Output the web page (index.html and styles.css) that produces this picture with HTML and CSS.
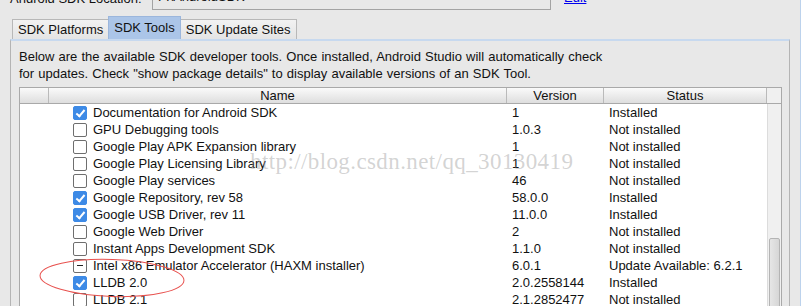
FILE: index.html
```html
<!DOCTYPE html>
<html>
<head>
<meta charset="utf-8">
<link rel="stylesheet" href="styles.css">
</head>
<body>
<div class="window">
  <div class="location">
    <span class="loc-label">Android SDK Location:</span>
    <span class="loc-field"><span class="loc-value">F:\AndroidSDK</span></span>
    <a class="loc-edit">Edit</a>
  </div>
  <div class="tabs">
    <div class="tab">SDK Platforms</div>
    <div class="tab active">SDK Tools</div>
    <div class="tab">SDK Update Sites</div>
  </div>
  <div class="panel">
    <p class="desc">Below are the available SDK developer tools. Once installed, Android Studio will automatically check<br>for updates. Check "show package details" to display available versions of an SDK Tool.</p>
    <div class="table">
      <div class="thead">
        <div class="th"></div>
        <div class="th">Name</div>
        <div class="th">Version</div>
        <div class="th">Status</div>
        <div class="th corner"></div>
      </div>
      <div class="tbody">
        <div class="rows">
          <div class="row"><span></span><span class="name"><i class="cb on"></i>Documentation for Android SDK</span><span>1</span><span>Installed</span></div>
          <div class="row"><span></span><span class="name"><i class="cb"></i>GPU Debugging tools</span><span>1.0.3</span><span>Not installed</span></div>
          <div class="row"><span></span><span class="name"><i class="cb"></i>Google Play APK Expansion library</span><span>1</span><span>Not installed</span></div>
          <div class="row"><span></span><span class="name"><i class="cb"></i>Google Play Licensing Library</span><span>1</span><span>Not installed</span></div>
          <div class="row"><span></span><span class="name"><i class="cb"></i>Google Play services</span><span>46</span><span>Not installed</span></div>
          <div class="row"><span></span><span class="name"><i class="cb on"></i>Google Repository, rev 58</span><span>58.0.0</span><span>Installed</span></div>
          <div class="row"><span></span><span class="name"><i class="cb on"></i>Google USB Driver, rev 11</span><span>11.0.0</span><span>Installed</span></div>
          <div class="row"><span></span><span class="name"><i class="cb"></i>Google Web Driver</span><span>2</span><span>Not installed</span></div>
          <div class="row"><span></span><span class="name"><i class="cb"></i>Instant Apps Development SDK</span><span>1.1.0</span><span>Not installed</span></div>
          <div class="row"><span></span><span class="name"><i class="cb mixed"></i>Intel x86 Emulator Accelerator (HAXM installer)</span><span>6.0.1</span><span>Update Available: 6.2.1</span></div>
          <div class="row"><span></span><span class="name"><i class="cb on"></i>LLDB 2.0</span><span>2.0.2558144</span><span>Installed</span></div>
          <div class="row"><span></span><span class="name"><i class="cb"></i>LLDB 2.1</span><span>2.1.2852477</span><span>Not installed</span></div>
        </div>
        <div class="scrollbar"><div class="thumb"></div></div>
      </div>
    </div>
  </div>
  <div class="watermark">http://blog.csdn.net/qq_30130419</div>
  <svg class="ellipse" width="150" height="44" viewBox="0 0 150 44">
    <ellipse cx="73" cy="21" rx="72" ry="18.5" transform="rotate(2 73 21)" fill="none" stroke="#e8524f" stroke-width="1"/>
  </svg>
</div>
</body>
</html>
```
FILE: styles.css
```css
html, body {
  margin: 0;
  padding: 0;
}
body {
  background: #e8e8e8;
  font-family: "Liberation Sans", Arial, sans-serif;
  font-size: 13px;
  color: #111;
  overflow: hidden;
}
.window {
  position: relative;
  width: 801px;
  height: 306px;
  overflow: hidden;
  border-right: 1px solid #bcd2ec;
  box-sizing: border-box;
}
.location {
  height: 10px;
  display: flex;
  align-items: flex-end;
  padding-left: 10px;
}
.loc-label {
  line-height: 14px;
  margin-bottom: 4px;
  width: 142px;
}
.loc-field {
  width: 399px;
  height: 22px;
  border: 1px solid #a3a3a3;
  box-sizing: border-box;
  padding-left: 5px;
  display: flex;
  align-items: flex-end;
}
.loc-value {
  line-height: 14px;
  margin-bottom: 5px;
}
.loc-edit {
  margin-left: 13px;
  color: #0000ee;
  text-decoration: underline;
  line-height: 14px;
  margin-bottom: 5px;
}
.tabs {
  display: flex;
  align-items: flex-end;
  margin-top: 6px;
  padding-left: 12px;
  height: 23px;
}
.tab {
  height: 20px;
  line-height: 20px;
  padding: 0 5px;
  border: 1px solid #b8b8b8;
  border-bottom: none;
  background: linear-gradient(#f2f2f2, #e4e4e4);
  box-sizing: border-box;
  margin-right: -1px;
}
.tab.active {
  height: 23px;
  line-height: 21px;
  background: #abc5e8;
  border-color: #9bb6dc;
  position: relative;
  z-index: 1;
}
.panel {
  margin-left: 10px;
  width: 780px;
  height: 280px;
  box-sizing: border-box;
  border: 1px solid #b4b4b4;
  border-top: 2px solid #c7d9ef;
  background: #e8e8e8;
}
.desc {
  margin: 0;
  padding: 7px 0 0 8px;
  line-height: 17px;
  height: 39px;
  box-sizing: border-box;
  word-spacing: 0.5px;
}
.table {
  margin: 7px 0 0 8px;
  width: 763px;
  border: 1px solid #a9a9a9;
  border-bottom: none;
  box-sizing: border-box;
  background: #fff;
  height: 240px;
}
.thead {
  display: grid;
  grid-template-columns: 29px 458px 97px 163px 14px;
  height: 15px;
  background: linear-gradient(#fafafa, #dedede);
  border-bottom: 1px solid #a9a9a9;
}
.th {
  text-align: center;
  line-height: 15px;
  border-right: 1px solid #bababa;
}
.th.corner {
  border-right: none;
  background: #f0f0f0;
}
.tbody {
  display: flex;
  height: 222px;
}
.rows {
  flex: 1;
}
.row {
  display: grid;
  grid-template-columns: 29px 458px 97px 163px;
  height: 17px;
  line-height: 17px;
  white-space: nowrap;
}
.row > span:nth-child(3),
.row > span:nth-child(4) {
  padding-left: 5px;
}
.name {
  display: flex;
  align-items: center;
  padding-left: 24px;
}
.cb {
  width: 14px;
  height: 14px;
  box-sizing: border-box;
  border: 1px solid #6e6e6e;
  border-radius: 2px;
  background: #fff;
  margin-right: 6px;
  flex: none;
  position: relative;
}
.cb.on {
  background: #3d8ae6;
  border-color: #3d8ae6;
}
.cb.on::after {
  content: "";
  position: absolute;
  left: 4px;
  top: 1px;
  width: 3px;
  height: 7px;
  border: solid #fff;
  border-width: 0 2px 2px 0;
  transform: rotate(40deg);
}
.cb.mixed::after {
  content: "";
  position: absolute;
  left: 3px;
  top: 5px;
  width: 6px;
  height: 1px;
  background: #222;
}
.scrollbar {
  width: 14px;
  background: #f0f0f0;
  border-left: 1px solid #dcdcdc;
  box-sizing: border-box;
  position: relative;
}
.thumb {
  position: absolute;
  left: 1px;
  right: 1px;
  top: 134px;
  bottom: 0;
  background: linear-gradient(90deg, #e6e6e6, #d6d6d6);
  border: 1px solid #b4b4b4;
  border-radius: 2px;
}
.watermark {
  position: absolute;
  left: 250px;
  top: 149px;
  font-family: "Liberation Serif", "Times New Roman", serif;
  font-size: 23px;
  color: rgba(150, 150, 150, 0.42);
  letter-spacing: 0.4px;
  pointer-events: none;
}
.ellipse {
  position: absolute;
  left: 39px;
  top: 257px;
}
```
